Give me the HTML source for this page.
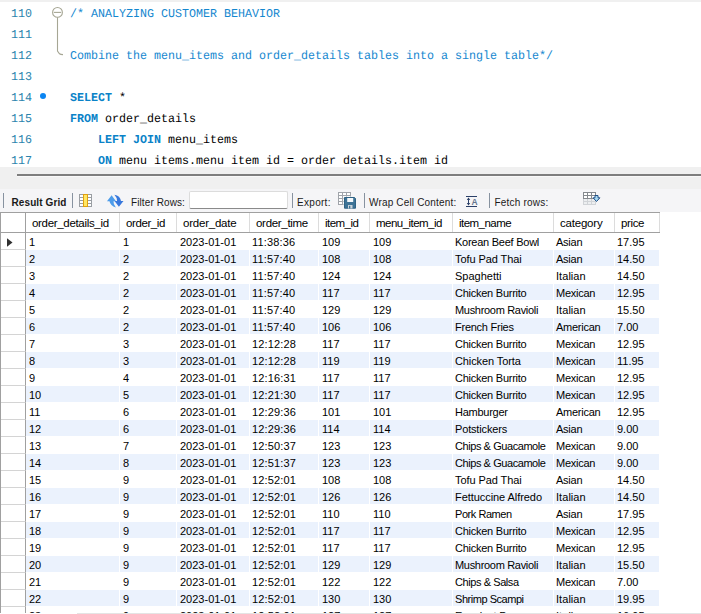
<!DOCTYPE html><html><head><meta charset="utf-8"><title>Result Grid</title><style>
*{box-sizing:border-box;margin:0;padding:0}
html,body{width:701px;height:614px;overflow:hidden;background:#fff}
body{position:relative;font-family:"Liberation Sans",sans-serif;font-size:11px;color:#000}
.abs{position:absolute}
#topband{left:0;top:0;width:701px;height:2px;background:#f0f0f0}
#editorbg{left:0;top:2px;width:701px;height:165px;background:#fff}
#editor{left:0;top:2px;width:701px;height:162px;overflow:hidden}
.ln{text-rendering:geometricPrecision;position:absolute;left:0;height:21px;line-height:21px;white-space:pre;font-family:"Liberation Mono",monospace;font-size:12px;letter-spacing:0}
.num{position:absolute;left:11px;color:#2b84ad;transform:scaleX(0.9722);transform-origin:0 0}
.code{position:absolute;left:70px;color:#000;transform:scaleX(0.9722);transform-origin:0 0}
.cm{color:#1487cf}
.kw{color:#0a82c8;font-weight:bold}
#split{left:0;top:167px;width:701px;height:22px;background:#f0f0f0}
#splitline{left:17px;top:174px;width:684px;height:2px;background:#7e7e7e}
#toolbar{left:0;top:189px;width:701px;height:23px;background:#f5f5f7}
.tb{position:absolute;top:190.5px;height:23px;line-height:23px;font-size:10px;white-space:pre;color:#1a1a1a}
.sep{position:absolute;top:193px;width:1px;height:15px;background:#8792a0}
#grid{left:0;top:212px;width:701px;height:402px;background:#fff;overflow:hidden}
.hd{position:absolute;top:0;height:21px;background:#fff;line-height:23px;padding-left:6px;font-size:11.5px;letter-spacing:-0.3px;white-space:pre;overflow:hidden}
.row{position:absolute;left:25px;width:634px;height:17px}
.row.alt .c{background:#ebf2fd}
.c{position:absolute;top:0;height:16px;line-height:18px;padding-left:2px;white-space:pre;overflow:hidden;font-size:11px}
.rh{position:absolute;left:1px;width:25px;height:17px;border-right:1px solid #a0a0a0;border-bottom:1px solid #d4d4d4;background:#fff}
</style></head><body>
<div class="abs" id="topband"></div>
<div class="abs" id="editorbg"></div>
<div class="abs" id="editor">
<div class="ln" style="top:2px"><span class="num">110</span><span class="code"><span class="cm">/* ANALYZING CUSTOMER BEHAVIOR</span></span></div>
<div class="ln" style="top:23px"><span class="num">111</span><span class="code"></span></div>
<div class="ln" style="top:44px"><span class="num">112</span><span class="code"><span class="cm">Combine the menu_items and order_details tables into a single table*/</span></span></div>
<div class="ln" style="top:65px"><span class="num">113</span><span class="code"></span></div>
<div class="ln" style="top:86px"><span class="num">114</span><span class="code"><span class="kw">SELECT</span> *</span></div>
<div class="ln" style="top:107px"><span class="num">115</span><span class="code"><span class="kw">FROM</span> order_details</span></div>
<div class="ln" style="top:128px"><span class="num">116</span><span class="code">    <span class="kw">LEFT JOIN</span> menu_items</span></div>
<div class="ln" style="top:149px"><span class="num">117</span><span class="code">    <span class="kw">ON</span> menu_items.menu_item_id = order_details.item_id</span></div>
<svg class="abs" style="left:50px;top:3px" width="16" height="60" viewBox="0 0 16 60"><g fill="none" stroke="#a6a694" stroke-width="1.100"><circle cx="7.500" cy="7.400" r="4.900"/><path d="M3.800 7.400H11.200"/><path d="M7.500 12.300V46L9.500 48.800Q10.500 49.600 13 49.600"/></g></svg>
<div class="abs" style="left:40px;top:91px;width:6px;height:6px;border-radius:50%;background:#0b85f2"></div>
</div>
<div class="abs" id="split"></div><div class="abs" id="splitline"></div><div class="abs" style="left:17px;top:176px;width:684px;height:1px;background:#f9f9f9"></div>
<div class="abs" id="toolbar"></div>
<div class="sep" style="left:3px"></div>
<div class="tb" style="left:11.5px;font-weight:bold;letter-spacing:0.1px">Result Grid</div>
<div class="sep" style="left:72px"></div>
<svg class="abs" style="left:79px;top:194px" width="14" height="14" viewBox="0 0 14 14" shape-rendering="crispEdges"><rect x="0" y="0" width="13" height="13" fill="#fff"/><g stroke="#9a9ea3" stroke-width="1" fill="none"><path d="M0.500 0.500H12.500V12.500H0.500Z"/><path d="M0 3.500H13M0 6.500H13M0 9.500H13"/></g><rect x="4.500" y="0.500" width="4" height="12" fill="#ffe763" stroke="#e0a010" stroke-width="1"/></svg>
<svg class="abs" style="left:107px;top:194px" width="17" height="14" viewBox="0 0 17 14"><path d="M4.600 1.300L0 7.200H2.500Q3.300 11.800 8.900 13.400Q6.200 10.600 6.500 7.200H9Z" fill="#4d9cea"/><path d="M11.900 12.800L7.500 7H10.100Q10.300 3.800 7.400 0.800Q13.200 1.900 14 7H16.500Z" fill="#3878dc"/></svg>
<div class="tb" style="left:131px;letter-spacing:0.1px">Filter Rows:</div>
<div class="abs" style="left:189px;top:191px;width:99px;height:18px;background:#fff;border:1px solid #dcdcdc;border-bottom-color:#8a8a8a;border-radius:2px"></div>
<div class="sep" style="left:292px"></div>
<div class="tb" style="left:297px;letter-spacing:0.3px">Export:</div>
<svg class="abs" style="left:338px;top:192px" width="19" height="17" viewBox="0 0 19 17"><g shape-rendering="crispEdges"><rect x="0" y="0" width="13" height="13" fill="#fff"/><g stroke="#a0a4aa" stroke-width="1" fill="none"><path d="M0.500 0.500H12.500V12.500H0.500Z"/><path d="M0 3.500H13M0 6.500H13M0 9.500H13M4.500 0V13M8.500 0V13"/></g></g><path d="M5.500 4.500H17.500L18.500 5.500V17H5.500Z" fill="#f6f7f8"/><path d="M6.500 5.500H16.500L17.500 6.500V16.200H6.500Z" fill="#3d7396" stroke="#2f6285" stroke-width="1"/><rect x="9.200" y="6" width="6" height="4" fill="#f4f8fb"/><rect x="10" y="13" width="4.500" height="3.500" fill="#c9d3da"/><rect x="11" y="13.800" width="1.300" height="2.700" fill="#3d7396"/></svg>
<div class="sep" style="left:364px"></div>
<div class="tb" style="left:369px;letter-spacing:0.17px">Wrap Cell Content:</div>
<svg class="abs" style="left:466px;top:195px" width="12" height="13" viewBox="0 0 12 13"><g shape-rendering="crispEdges" fill="#2b3f68"><rect x="0" y="1" width="11" height="1"/><rect x="0" y="11" width="11" height="1"/><rect x="2" y="3" width="1" height="7"/></g><path d="M0.800 5L2.500 2.500L4.200 5Z M0.800 8L2.500 10.500L4.200 8Z" fill="#2b3f68"/><text x="5.500" y="9.800" font-family="Liberation Sans, sans-serif" font-size="8.500" font-weight="bold" fill="#66758f">A</text></svg>
<div class="sep" style="left:489px"></div>
<div class="tb" style="left:494.5px;letter-spacing:0.2px">Fetch rows:</div>
<svg class="abs" style="left:583px;top:192px" width="18" height="14" viewBox="0 0 18 14"><g shape-rendering="crispEdges"><rect x="0" y="0" width="13" height="7" fill="#fff"/><rect x="0" y="7" width="13" height="6" fill="#eceef0"/><g stroke="#d0d3d7" stroke-width="1" fill="none"><path d="M0.500 6.500H12.500V12.500H0.500Z"/><path d="M0 9.500H13M4.500 6V13M8.500 6V13"/></g><g stroke="#85898e" stroke-width="1" fill="none"><path d="M0.500 0.500H12.500V6.500H0.500Z"/><path d="M0 3.500H13M4.500 0V6M8.500 0V6"/></g></g><path d="M12 3.500H15V5.800H16.900L13.500 9.500L10.100 5.800H12Z" fill="#a9daf2" stroke="#1f4f88" stroke-width="1"/></svg>
<div class="abs" id="grid">
<div class="hd" style="left:0px;width:26px"></div>
<div class="hd" style="left:26px;width:94px;letter-spacing:-0.32px">order_details_id</div>
<div class="hd" style="left:120px;width:57px;letter-spacing:-0.4px">order_id</div>
<div class="hd" style="left:177px;width:73px;letter-spacing:-0.22px">order_date</div>
<div class="hd" style="left:250px;width:69px;letter-spacing:-0.3px">order_time</div>
<div class="hd" style="left:319px;width:51px;letter-spacing:-0.53px">item_id</div>
<div class="hd" style="left:370px;width:83px;letter-spacing:-0.53px">menu_item_id</div>
<div class="hd" style="left:453px;width:101px;letter-spacing:-0.54px">item_name</div>
<div class="hd" style="left:554px;width:61px;letter-spacing:-0.21px">category</div>
<div class="hd" style="left:615px;width:45px;letter-spacing:-0.38px">price</div>
<div class="abs" style="left:119px;top:1px;width:1px;height:19px;background:#dcdcdc"></div>
<div class="abs" style="left:176px;top:1px;width:1px;height:19px;background:#dcdcdc"></div>
<div class="abs" style="left:249px;top:1px;width:1px;height:19px;background:#dcdcdc"></div>
<div class="abs" style="left:318px;top:1px;width:1px;height:19px;background:#dcdcdc"></div>
<div class="abs" style="left:369px;top:1px;width:1px;height:19px;background:#dcdcdc"></div>
<div class="abs" style="left:452px;top:1px;width:1px;height:19px;background:#dcdcdc"></div>
<div class="abs" style="left:553px;top:1px;width:1px;height:19px;background:#dcdcdc"></div>
<div class="abs" style="left:614px;top:1px;width:1px;height:19px;background:#dcdcdc"></div>
<div class="abs" style="left:659px;top:1px;width:1px;height:19px;background:#dcdcdc"></div>
<div class="abs" style="left:0;top:0;width:660px;height:1px;background:#a0a0a0"></div>
<div class="abs" style="left:0;top:20px;width:660px;height:1px;background:#a0a0a0"></div>
<div class="abs" style="left:25px;top:0;width:1px;height:21px;background:#a0a0a0"></div>
<div class="abs" style="left:0;top:0;width:1px;height:21px;background:#a0a0a0"></div>
<div class="rh" style="top:21px"></div>
<div class="row" style="top:21px">
<div class="c" style="left:1px;width:93px;padding-left:3px">1</div>
<div class="c" style="left:95px;width:56px;padding-left:3px">1</div>
<div class="c" style="left:152px;width:72px;padding-left:3px">2023-01-01</div>
<div class="c" style="left:225px;width:68px;letter-spacing:0.15px">11:38:36</div>
<div class="c" style="left:294px;width:50px;padding-left:3px">109</div>
<div class="c" style="left:345px;width:82px;padding-left:3px">109</div>
<div class="c" style="left:428px;width:100px;letter-spacing:-0.25px">Korean Beef Bowl</div>
<div class="c" style="left:529px;width:60px;letter-spacing:-0.25px">Asian</div>
<div class="c" style="left:590px;width:44px">17.95</div>
</div>
<div class="rh" style="top:38px"></div>
<div class="row alt" style="top:38px">
<div class="c" style="left:1px;width:93px;padding-left:3px">2</div>
<div class="c" style="left:95px;width:56px;padding-left:3px">2</div>
<div class="c" style="left:152px;width:72px;padding-left:3px">2023-01-01</div>
<div class="c" style="left:225px;width:68px;letter-spacing:0.15px">11:57:40</div>
<div class="c" style="left:294px;width:50px;padding-left:3px">108</div>
<div class="c" style="left:345px;width:82px;padding-left:3px">108</div>
<div class="c" style="left:428px;width:100px;letter-spacing:-0.08px">Tofu Pad Thai</div>
<div class="c" style="left:529px;width:60px;letter-spacing:-0.25px">Asian</div>
<div class="c" style="left:590px;width:44px">14.50</div>
</div>
<div class="rh" style="top:55px"></div>
<div class="row" style="top:55px">
<div class="c" style="left:1px;width:93px;padding-left:3px">3</div>
<div class="c" style="left:95px;width:56px;padding-left:3px">2</div>
<div class="c" style="left:152px;width:72px;padding-left:3px">2023-01-01</div>
<div class="c" style="left:225px;width:68px;letter-spacing:0.15px">11:57:40</div>
<div class="c" style="left:294px;width:50px;padding-left:3px">124</div>
<div class="c" style="left:345px;width:82px;padding-left:3px">124</div>
<div class="c" style="left:428px;width:100px;letter-spacing:0px">Spaghetti</div>
<div class="c" style="left:529px;width:60px;letter-spacing:0.05px">Italian</div>
<div class="c" style="left:590px;width:44px">14.50</div>
</div>
<div class="rh" style="top:72px"></div>
<div class="row alt" style="top:72px">
<div class="c" style="left:1px;width:93px;padding-left:3px">4</div>
<div class="c" style="left:95px;width:56px;padding-left:3px">2</div>
<div class="c" style="left:152px;width:72px;padding-left:3px">2023-01-01</div>
<div class="c" style="left:225px;width:68px;letter-spacing:0.15px">11:57:40</div>
<div class="c" style="left:294px;width:50px;padding-left:3px">117</div>
<div class="c" style="left:345px;width:82px;padding-left:3px">117</div>
<div class="c" style="left:428px;width:100px;letter-spacing:-0.25px">Chicken Burrito</div>
<div class="c" style="left:529px;width:60px;letter-spacing:-0.25px">Mexican</div>
<div class="c" style="left:590px;width:44px">12.95</div>
</div>
<div class="rh" style="top:89px"></div>
<div class="row" style="top:89px">
<div class="c" style="left:1px;width:93px;padding-left:3px">5</div>
<div class="c" style="left:95px;width:56px;padding-left:3px">2</div>
<div class="c" style="left:152px;width:72px;padding-left:3px">2023-01-01</div>
<div class="c" style="left:225px;width:68px;letter-spacing:0.15px">11:57:40</div>
<div class="c" style="left:294px;width:50px;padding-left:3px">129</div>
<div class="c" style="left:345px;width:82px;padding-left:3px">129</div>
<div class="c" style="left:428px;width:100px;letter-spacing:-0.31px">Mushroom Ravioli</div>
<div class="c" style="left:529px;width:60px;letter-spacing:0.05px">Italian</div>
<div class="c" style="left:590px;width:44px">15.50</div>
</div>
<div class="rh" style="top:106px"></div>
<div class="row alt" style="top:106px">
<div class="c" style="left:1px;width:93px;padding-left:3px">6</div>
<div class="c" style="left:95px;width:56px;padding-left:3px">2</div>
<div class="c" style="left:152px;width:72px;padding-left:3px">2023-01-01</div>
<div class="c" style="left:225px;width:68px;letter-spacing:0.15px">11:57:40</div>
<div class="c" style="left:294px;width:50px;padding-left:3px">106</div>
<div class="c" style="left:345px;width:82px;padding-left:3px">106</div>
<div class="c" style="left:428px;width:100px;letter-spacing:-0.25px">French Fries</div>
<div class="c" style="left:529px;width:60px;letter-spacing:-0.25px">American</div>
<div class="c" style="left:590px;width:44px">7.00</div>
</div>
<div class="rh" style="top:123px"></div>
<div class="row" style="top:123px">
<div class="c" style="left:1px;width:93px;padding-left:3px">7</div>
<div class="c" style="left:95px;width:56px;padding-left:3px">3</div>
<div class="c" style="left:152px;width:72px;padding-left:3px">2023-01-01</div>
<div class="c" style="left:225px;width:68px;letter-spacing:0.15px">12:12:28</div>
<div class="c" style="left:294px;width:50px;padding-left:3px">117</div>
<div class="c" style="left:345px;width:82px;padding-left:3px">117</div>
<div class="c" style="left:428px;width:100px;letter-spacing:-0.25px">Chicken Burrito</div>
<div class="c" style="left:529px;width:60px;letter-spacing:-0.25px">Mexican</div>
<div class="c" style="left:590px;width:44px">12.95</div>
</div>
<div class="rh" style="top:140px"></div>
<div class="row alt" style="top:140px">
<div class="c" style="left:1px;width:93px;padding-left:3px">8</div>
<div class="c" style="left:95px;width:56px;padding-left:3px">3</div>
<div class="c" style="left:152px;width:72px;padding-left:3px">2023-01-01</div>
<div class="c" style="left:225px;width:68px;letter-spacing:0.15px">12:12:28</div>
<div class="c" style="left:294px;width:50px;padding-left:3px">119</div>
<div class="c" style="left:345px;width:82px;padding-left:3px">119</div>
<div class="c" style="left:428px;width:100px;letter-spacing:-0.1px">Chicken Torta</div>
<div class="c" style="left:529px;width:60px;letter-spacing:-0.25px">Mexican</div>
<div class="c" style="left:590px;width:44px">11.95</div>
</div>
<div class="rh" style="top:157px"></div>
<div class="row" style="top:157px">
<div class="c" style="left:1px;width:93px;padding-left:3px">9</div>
<div class="c" style="left:95px;width:56px;padding-left:3px">4</div>
<div class="c" style="left:152px;width:72px;padding-left:3px">2023-01-01</div>
<div class="c" style="left:225px;width:68px;letter-spacing:0.15px">12:16:31</div>
<div class="c" style="left:294px;width:50px;padding-left:3px">117</div>
<div class="c" style="left:345px;width:82px;padding-left:3px">117</div>
<div class="c" style="left:428px;width:100px;letter-spacing:-0.25px">Chicken Burrito</div>
<div class="c" style="left:529px;width:60px;letter-spacing:-0.25px">Mexican</div>
<div class="c" style="left:590px;width:44px">12.95</div>
</div>
<div class="rh" style="top:174px"></div>
<div class="row alt" style="top:174px">
<div class="c" style="left:1px;width:93px;padding-left:3px">10</div>
<div class="c" style="left:95px;width:56px;padding-left:3px">5</div>
<div class="c" style="left:152px;width:72px;padding-left:3px">2023-01-01</div>
<div class="c" style="left:225px;width:68px;letter-spacing:0.15px">12:21:30</div>
<div class="c" style="left:294px;width:50px;padding-left:3px">117</div>
<div class="c" style="left:345px;width:82px;padding-left:3px">117</div>
<div class="c" style="left:428px;width:100px;letter-spacing:-0.25px">Chicken Burrito</div>
<div class="c" style="left:529px;width:60px;letter-spacing:-0.25px">Mexican</div>
<div class="c" style="left:590px;width:44px">12.95</div>
</div>
<div class="rh" style="top:191px"></div>
<div class="row" style="top:191px">
<div class="c" style="left:1px;width:93px;padding-left:3px">11</div>
<div class="c" style="left:95px;width:56px;padding-left:3px">6</div>
<div class="c" style="left:152px;width:72px;padding-left:3px">2023-01-01</div>
<div class="c" style="left:225px;width:68px;letter-spacing:0.15px">12:29:36</div>
<div class="c" style="left:294px;width:50px;padding-left:3px">101</div>
<div class="c" style="left:345px;width:82px;padding-left:3px">101</div>
<div class="c" style="left:428px;width:100px;letter-spacing:-0.25px">Hamburger</div>
<div class="c" style="left:529px;width:60px;letter-spacing:-0.25px">American</div>
<div class="c" style="left:590px;width:44px">12.95</div>
</div>
<div class="rh" style="top:208px"></div>
<div class="row alt" style="top:208px">
<div class="c" style="left:1px;width:93px;padding-left:3px">12</div>
<div class="c" style="left:95px;width:56px;padding-left:3px">6</div>
<div class="c" style="left:152px;width:72px;padding-left:3px">2023-01-01</div>
<div class="c" style="left:225px;width:68px;letter-spacing:0.15px">12:29:36</div>
<div class="c" style="left:294px;width:50px;padding-left:3px">114</div>
<div class="c" style="left:345px;width:82px;padding-left:3px">114</div>
<div class="c" style="left:428px;width:100px;letter-spacing:-0.16px">Potstickers</div>
<div class="c" style="left:529px;width:60px;letter-spacing:-0.25px">Asian</div>
<div class="c" style="left:590px;width:44px">9.00</div>
</div>
<div class="rh" style="top:225px"></div>
<div class="row" style="top:225px">
<div class="c" style="left:1px;width:93px;padding-left:3px">13</div>
<div class="c" style="left:95px;width:56px;padding-left:3px">7</div>
<div class="c" style="left:152px;width:72px;padding-left:3px">2023-01-01</div>
<div class="c" style="left:225px;width:68px;letter-spacing:0.15px">12:50:37</div>
<div class="c" style="left:294px;width:50px;padding-left:3px">123</div>
<div class="c" style="left:345px;width:82px;padding-left:3px">123</div>
<div class="c" style="left:428px;width:100px;letter-spacing:-0.43px">Chips &amp; Guacamole</div>
<div class="c" style="left:529px;width:60px;letter-spacing:-0.25px">Mexican</div>
<div class="c" style="left:590px;width:44px">9.00</div>
</div>
<div class="rh" style="top:242px"></div>
<div class="row alt" style="top:242px">
<div class="c" style="left:1px;width:93px;padding-left:3px">14</div>
<div class="c" style="left:95px;width:56px;padding-left:3px">8</div>
<div class="c" style="left:152px;width:72px;padding-left:3px">2023-01-01</div>
<div class="c" style="left:225px;width:68px;letter-spacing:0.15px">12:51:37</div>
<div class="c" style="left:294px;width:50px;padding-left:3px">123</div>
<div class="c" style="left:345px;width:82px;padding-left:3px">123</div>
<div class="c" style="left:428px;width:100px;letter-spacing:-0.43px">Chips &amp; Guacamole</div>
<div class="c" style="left:529px;width:60px;letter-spacing:-0.25px">Mexican</div>
<div class="c" style="left:590px;width:44px">9.00</div>
</div>
<div class="rh" style="top:259px"></div>
<div class="row" style="top:259px">
<div class="c" style="left:1px;width:93px;padding-left:3px">15</div>
<div class="c" style="left:95px;width:56px;padding-left:3px">9</div>
<div class="c" style="left:152px;width:72px;padding-left:3px">2023-01-01</div>
<div class="c" style="left:225px;width:68px;letter-spacing:0.15px">12:52:01</div>
<div class="c" style="left:294px;width:50px;padding-left:3px">108</div>
<div class="c" style="left:345px;width:82px;padding-left:3px">108</div>
<div class="c" style="left:428px;width:100px;letter-spacing:-0.08px">Tofu Pad Thai</div>
<div class="c" style="left:529px;width:60px;letter-spacing:-0.25px">Asian</div>
<div class="c" style="left:590px;width:44px">14.50</div>
</div>
<div class="rh" style="top:276px"></div>
<div class="row alt" style="top:276px">
<div class="c" style="left:1px;width:93px;padding-left:3px">16</div>
<div class="c" style="left:95px;width:56px;padding-left:3px">9</div>
<div class="c" style="left:152px;width:72px;padding-left:3px">2023-01-01</div>
<div class="c" style="left:225px;width:68px;letter-spacing:0.15px">12:52:01</div>
<div class="c" style="left:294px;width:50px;padding-left:3px">126</div>
<div class="c" style="left:345px;width:82px;padding-left:3px">126</div>
<div class="c" style="left:428px;width:100px;letter-spacing:-0.06px">Fettuccine Alfredo</div>
<div class="c" style="left:529px;width:60px;letter-spacing:0.05px">Italian</div>
<div class="c" style="left:590px;width:44px">14.50</div>
</div>
<div class="rh" style="top:293px"></div>
<div class="row" style="top:293px">
<div class="c" style="left:1px;width:93px;padding-left:3px">17</div>
<div class="c" style="left:95px;width:56px;padding-left:3px">9</div>
<div class="c" style="left:152px;width:72px;padding-left:3px">2023-01-01</div>
<div class="c" style="left:225px;width:68px;letter-spacing:0.15px">12:52:01</div>
<div class="c" style="left:294px;width:50px;padding-left:3px">110</div>
<div class="c" style="left:345px;width:82px;padding-left:3px">110</div>
<div class="c" style="left:428px;width:100px;letter-spacing:-0.45px">Pork Ramen</div>
<div class="c" style="left:529px;width:60px;letter-spacing:-0.25px">Asian</div>
<div class="c" style="left:590px;width:44px">17.95</div>
</div>
<div class="rh" style="top:310px"></div>
<div class="row alt" style="top:310px">
<div class="c" style="left:1px;width:93px;padding-left:3px">18</div>
<div class="c" style="left:95px;width:56px;padding-left:3px">9</div>
<div class="c" style="left:152px;width:72px;padding-left:3px">2023-01-01</div>
<div class="c" style="left:225px;width:68px;letter-spacing:0.15px">12:52:01</div>
<div class="c" style="left:294px;width:50px;padding-left:3px">117</div>
<div class="c" style="left:345px;width:82px;padding-left:3px">117</div>
<div class="c" style="left:428px;width:100px;letter-spacing:-0.25px">Chicken Burrito</div>
<div class="c" style="left:529px;width:60px;letter-spacing:-0.25px">Mexican</div>
<div class="c" style="left:590px;width:44px">12.95</div>
</div>
<div class="rh" style="top:327px"></div>
<div class="row" style="top:327px">
<div class="c" style="left:1px;width:93px;padding-left:3px">19</div>
<div class="c" style="left:95px;width:56px;padding-left:3px">9</div>
<div class="c" style="left:152px;width:72px;padding-left:3px">2023-01-01</div>
<div class="c" style="left:225px;width:68px;letter-spacing:0.15px">12:52:01</div>
<div class="c" style="left:294px;width:50px;padding-left:3px">117</div>
<div class="c" style="left:345px;width:82px;padding-left:3px">117</div>
<div class="c" style="left:428px;width:100px;letter-spacing:-0.25px">Chicken Burrito</div>
<div class="c" style="left:529px;width:60px;letter-spacing:-0.25px">Mexican</div>
<div class="c" style="left:590px;width:44px">12.95</div>
</div>
<div class="rh" style="top:344px"></div>
<div class="row alt" style="top:344px">
<div class="c" style="left:1px;width:93px;padding-left:3px">20</div>
<div class="c" style="left:95px;width:56px;padding-left:3px">9</div>
<div class="c" style="left:152px;width:72px;padding-left:3px">2023-01-01</div>
<div class="c" style="left:225px;width:68px;letter-spacing:0.15px">12:52:01</div>
<div class="c" style="left:294px;width:50px;padding-left:3px">129</div>
<div class="c" style="left:345px;width:82px;padding-left:3px">129</div>
<div class="c" style="left:428px;width:100px;letter-spacing:-0.31px">Mushroom Ravioli</div>
<div class="c" style="left:529px;width:60px;letter-spacing:0.05px">Italian</div>
<div class="c" style="left:590px;width:44px">15.50</div>
</div>
<div class="rh" style="top:361px"></div>
<div class="row" style="top:361px">
<div class="c" style="left:1px;width:93px;padding-left:3px">21</div>
<div class="c" style="left:95px;width:56px;padding-left:3px">9</div>
<div class="c" style="left:152px;width:72px;padding-left:3px">2023-01-01</div>
<div class="c" style="left:225px;width:68px;letter-spacing:0.15px">12:52:01</div>
<div class="c" style="left:294px;width:50px;padding-left:3px">122</div>
<div class="c" style="left:345px;width:82px;padding-left:3px">122</div>
<div class="c" style="left:428px;width:100px;letter-spacing:-0.42px">Chips &amp; Salsa</div>
<div class="c" style="left:529px;width:60px;letter-spacing:-0.25px">Mexican</div>
<div class="c" style="left:590px;width:44px">7.00</div>
</div>
<div class="rh" style="top:378px"></div>
<div class="row alt" style="top:378px">
<div class="c" style="left:1px;width:93px;padding-left:3px">22</div>
<div class="c" style="left:95px;width:56px;padding-left:3px">9</div>
<div class="c" style="left:152px;width:72px;padding-left:3px">2023-01-01</div>
<div class="c" style="left:225px;width:68px;letter-spacing:0.15px">12:52:01</div>
<div class="c" style="left:294px;width:50px;padding-left:3px">130</div>
<div class="c" style="left:345px;width:82px;padding-left:3px">130</div>
<div class="c" style="left:428px;width:100px;letter-spacing:-0.46px">Shrimp Scampi</div>
<div class="c" style="left:529px;width:60px;letter-spacing:0.05px">Italian</div>
<div class="c" style="left:590px;width:44px">19.95</div>
</div>
<div class="rh" style="top:395px"></div>
<div class="row" style="top:395px">
<div class="c" style="left:1px;width:93px;padding-left:3px">23</div>
<div class="c" style="left:95px;width:56px;padding-left:3px">9</div>
<div class="c" style="left:152px;width:72px;padding-left:3px">2023-01-01</div>
<div class="c" style="left:225px;width:68px;letter-spacing:0.15px">12:52:01</div>
<div class="c" style="left:294px;width:50px;padding-left:3px">127</div>
<div class="c" style="left:345px;width:82px;padding-left:3px">127</div>
<div class="c" style="left:428px;width:100px;letter-spacing:-0.25px">Eggplant Parmesan</div>
<div class="c" style="left:529px;width:60px;letter-spacing:0.05px">Italian</div>
<div class="c" style="left:590px;width:44px">16.95</div>
</div>
<div class="abs" style="left:0;top:21px;width:1px;height:400px;background:#a0a0a0"></div>
<svg class="abs" style="left:6px;top:25px" width="8" height="11" viewBox="0 0 8 11"><path d="M1 1.200L6.500 5.500L1 9.800Z" fill="#303030"/></svg>
</div>
<div class="abs" style="left:0;top:613px;width:701px;height:1px;background:#fff"></div>
<div class="abs" style="left:77px;top:613px;width:624px;height:1px;background:#e4e4e4"></div>
</body></html>
